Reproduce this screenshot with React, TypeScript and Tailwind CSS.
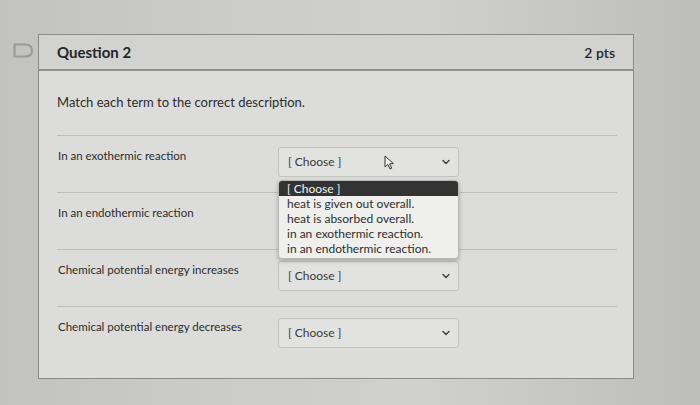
import { ChevronDown } from 'lucide-react';

const rows = [
  { label: 'In an exothermic reaction', open: true },
  { label: 'In an endothermic reaction', hidden: true },
  { label: 'Chemical potential energy increases' },
  { label: 'Chemical potential energy decreases' },
];

const options = [
  'heat is given out overall.',
  'heat is absorbed overall.',
  'in an exothermic reaction.',
  'in an endothermic reaction.',
];

function Select({ open }: { open?: boolean }) {
  return (
    <div className="relative w-[181px]">
      <div className="h-[30px] flex items-center justify-between pl-[9px] pr-[6px] bg-[#e2e2e0] border border-[#c2c2c0] rounded-[3px] text-[12px] text-[#3a3a3a]">
        <span>[ Choose ]</span>
        <ChevronDown size={12} strokeWidth={3} className="text-[#444]" />
      </div>
      {open && (
        <>
          {/* mouse pointer */}
          <svg width="11" height="15" viewBox="0 0 11 15" className="absolute left-[106px] top-[8px]">
            <path d="M1 1 L1 12 L3.8 9.4 L6 14 L7.8 13.2 L5.6 8.8 L9.4 8.6 Z" fill="#f2f2f2" stroke="#333" strokeWidth="1" strokeLinejoin="round" />
          </svg>
          <div className="absolute left-0 top-[33px] w-[181px] bg-[#efefed] border border-[#b8b8b6] rounded-[4px] shadow-[0_2px_4px_rgba(0,0,0,0.25)] overflow-hidden text-[12px] leading-[15px] text-[#2e2e2e] z-10">
            <div className="bg-[#333333] text-[#f2f2f2] px-[8px]">[ Choose ]</div>
            {options.map((o) => (
              <div key={o} className="px-[8px]">{o}</div>
            ))}
            <div className="h-[2px]" />
          </div>
        </>
      )}
    </div>
  );
}

export default function App() {
  return (
    <div
      className="w-[700px] h-[405px] overflow-hidden pt-[34px] bg-[linear-gradient(90deg,#c2c2c0_0%,#cbcbc9_30%,#d0d0ce_60%,#bdbdbb_100%)]"
      style={{ fontFamily: 'Lato, "Open Sans", sans-serif' }}
    >
      <div className="flex">
        <div className="w-[38px] pt-[9px] pl-[13px]">
          <svg width="21" height="15" viewBox="0 0 21 15">
            <path d="M1.5 1.5 H12 Q19 1.5 19 7.5 Q19 13.5 12 13.5 H1.5 Z" fill="none" stroke="#9a9a9a" strokeWidth="2.2" strokeLinejoin="round" />
          </svg>
        </div>
        <div className="w-[596px] h-[345px] border border-[#8a8a88] bg-[#dcdcda] flex flex-col">
          <div className="h-[36px] flex items-center justify-between pl-[18px] pr-[18px] bg-[#d2d2d0] border-b-2 border-[#8f8f8d]">
            <span className="text-[15px] font-bold text-[#262626]">Question 2</span>
            <span className="text-[14px] font-semibold text-[#262626]">2 pts</span>
          </div>
          <div className="pl-[18px] pr-[16px] pt-[22px]">
            <p className="text-[13px] text-[#2c2c2c] mb-[22px]">Match each term to the correct description.</p>
            {rows.map((r) => (
              <div key={r.label} className="flex h-[57px] pt-[11px] border-t border-[#bdbdbb]">
                <div className="w-[221px] pl-[1px] text-[11.5px] text-[#2c2c2c]">{r.label}</div>
                {!r.hidden && <Select open={r.open} />}
              </div>
            ))}
          </div>
        </div>
      </div>
    </div>
  );
}
